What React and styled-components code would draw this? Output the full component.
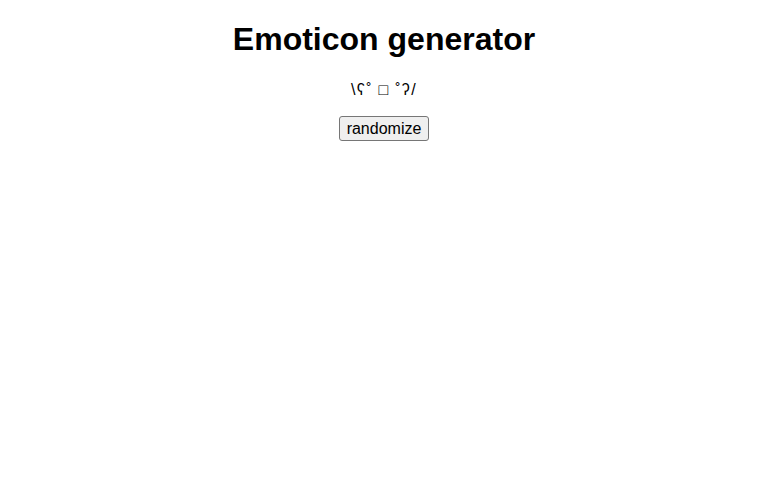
import React, { useState } from "react";
import styled, { createGlobalStyle } from "styled-components";

const GlobalStyle = createGlobalStyle`
  body {
    margin: 8px;
    background: #fff;
    color: #000;
    font-family: "Liberation Sans", Arial, sans-serif;
  }
`;

const Page = styled.div`
  text-align: center;
`;

const Title = styled.h1`
  font-size: 32px;
  font-weight: bold;
  margin: 13px 0 0;
`;

const Face = styled.p`
  font-size: 16px;
  letter-spacing: 1.3px;
  margin: 23px 0 17px;
`;

const RandomButton = styled.button`
  font-family: "Liberation Sans", Arial, sans-serif;
  font-size: 16px;
  line-height: 19px;
  padding: 2px 7px;
  color: #000;
  background: #efefef;
  border: 1px solid #767676;
  border-radius: 3px;
`;

const faces = ["\\ʕ˚ □ ˚ʔ/", "(ʘ‿ʘ)", "ʕ•ᴥ•ʔ", "(¬‿¬)"];

const App = () => {
  const [index, setIndex] = useState(0);

  return (
    <Page>
      <GlobalStyle />
      <Title>Emoticon generator</Title>
      <Face>{faces[index]}</Face>
      <RandomButton onClick={() => setIndex((index + 1) % faces.length)}>
        randomize
      </RandomButton>
    </Page>
  );
};

export default App;
